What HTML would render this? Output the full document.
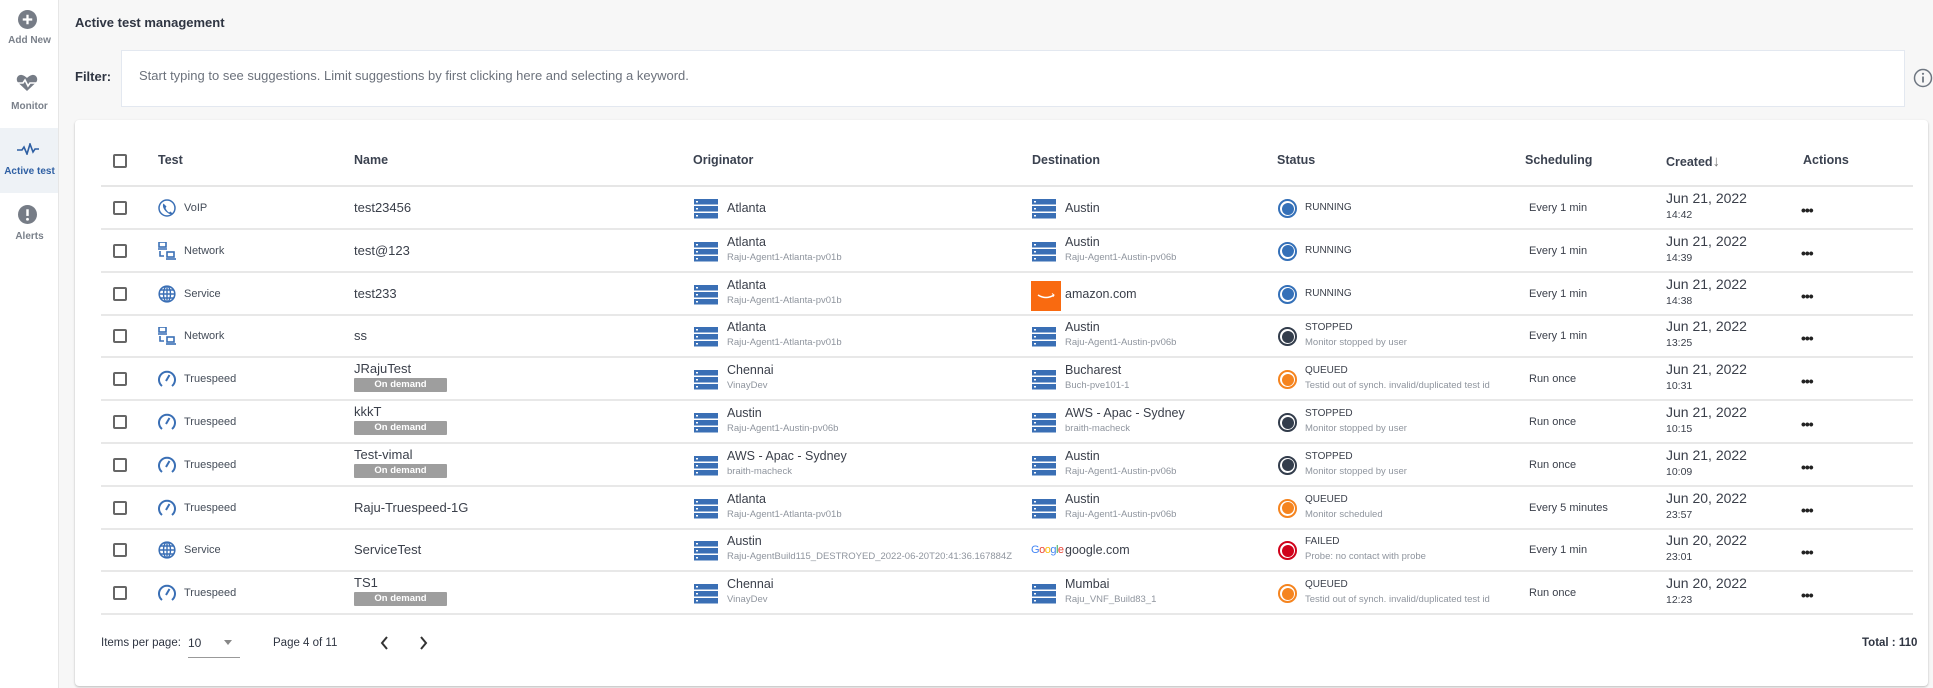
<!DOCTYPE html>
<html><head><meta charset="utf-8"><style>
*{box-sizing:border-box;margin:0;padding:0}
body{width:1933px;height:688px;overflow:hidden;background:#f7f7f7;font-family:"Liberation Sans",sans-serif;color:#3a3f4a;position:relative}
.abs{position:absolute}
.side{left:0;top:0;width:59px;height:688px;background:#fff;border-right:1px solid #e6e6e6}
.si{position:absolute;left:0;width:59px;text-align:center;font-size:10px;font-weight:bold;color:#7a808a}
.card{left:75px;top:120px;width:1853px;height:566px;background:#fff;border-radius:4px;box-shadow:0 1px 2px rgba(0,0,0,.25)}
.hd{position:absolute;top:153px;font-size:12.5px;font-weight:bold;color:#3b4250}
.row{position:absolute;left:101px;width:1812px;height:43px;border-bottom:2px solid #e8e8e8}
.cb{position:absolute;left:12px;top:14px;width:14px;height:14px;border:2px solid #666;border-radius:2px;background:#fff}
.t{position:absolute;font-size:11px;color:#444c58}
.n{position:absolute;font-size:13px;color:#3a3f4a}
.m{position:absolute;font-size:12.5px;color:#3a3f4a}
.s{position:absolute;font-size:9.5px;color:#8f959e}
.st{position:absolute;font-size:10px;color:#3a3f4a}
.badge{position:absolute;left:253px;top:20px;width:93px;height:14px;background:#9e9e9e;color:#fff;font-size:9.5px;font-weight:bold;text-align:center;line-height:14px;border-radius:1px}
.ring{position:absolute;left:1177px;width:19px;height:19px;border-radius:50%;border:2px solid;padding:1.5px;background:#fff}
.ring i{display:block;width:100%;height:100%;border-radius:50%}
.date{position:absolute;left:1565px;font-size:14px;color:#3a3f4a}
.time{position:absolute;left:1565px;font-size:10.5px;color:#3a3f4a}
.dots{position:absolute;left:1700px;top:18px;font-size:14px;font-weight:bold;letter-spacing:-1px;color:#222;line-height:10px}
</style></head><body>

<div class="abs side">
  <svg class="abs" style="left:18px;top:10px" width="19" height="19" viewBox="0 0 20 20"><circle cx="10" cy="10" r="10" fill="#767c86"/><path d="M10 5v10M5 10h10" stroke="#fff" stroke-width="2.4"/></svg>
  <div class="si" style="top:35px">Add New</div>
  <svg class="abs" style="left:16px;top:74px" width="22" height="18" viewBox="0 0 22 18"><path d="M11 17L2 8.5C-1 5 2 0 6 1c2 .4 4 2 5 3 1-1 3-2.6 5-3 4-1 7 4 4 7.5z" fill="#767c86"/><path d="M1 9h6l2-3 3 6 2-3h7" stroke="#fff" stroke-width="1.6" fill="none"/></svg>
  <div class="si" style="top:101px">Monitor</div>
  <div class="abs" style="left:0;top:128px;width:58px;height:65px;background:#eef2f6"></div>
  <svg class="abs" style="left:17px;top:143px" width="22" height="12" viewBox="0 0 22 12"><path d="M0 7h5l2-3 3 7 3-10 3 8 2-3h4" stroke="#2e5fa3" stroke-width="1.6" fill="none"/></svg>
  <div class="si" style="top:166px;color:#2e5fa3">Active test</div>
  <svg class="abs" style="left:18px;top:205px" width="19" height="19" viewBox="0 0 20 20"><circle cx="10" cy="10" r="10" fill="#767c86"/><path d="M10 4.5v7" stroke="#fff" stroke-width="2.6"/><circle cx="10" cy="15" r="1.5" fill="#fff"/></svg>
  <div class="si" style="top:231px">Alerts</div>
</div>

<div class="abs" style="left:75px;top:15px;font-size:13px;font-weight:bold;color:#2f3542">Active test management</div>
<div class="abs" style="left:75px;top:69px;font-size:13px;font-weight:bold;color:#2f3542">Filter:</div>
<div class="abs" style="left:121px;top:50px;width:1784px;height:57px;background:#fff;border:1px solid #e3e8f0"></div>
<div class="abs" style="left:139px;top:68px;font-size:13px;color:#6c727c">Start typing to see suggestions. Limit suggestions by first clicking here and selecting a keyword.</div>
<svg class="abs" style="left:1913px;top:68px" width="20" height="20" viewBox="0 0 20 20"><circle cx="10" cy="10" r="8.5" stroke="#6e7681" stroke-width="1.5" fill="none"/><path d="M10 8.5v6" stroke="#6e7681" stroke-width="1.8"/><circle cx="10" cy="5.8" r="1.1" fill="#6e7681"/></svg>

<div class="abs card"></div>
<div class="abs" style="left:113px;top:154px;width:14px;height:14px;border:2px solid #666;border-radius:2px;background:#fff"></div>
<div class="hd" style="left:158px">Test</div>
<div class="hd" style="left:354px">Name</div>
<div class="hd" style="left:693px">Originator</div>
<div class="hd" style="left:1032px">Destination</div>
<div class="hd" style="left:1277px">Status</div>
<div class="hd" style="left:1525px">Scheduling</div>
<div class="hd" style="left:1666px">Created<span style="font-weight:normal;color:#777;font-size:15px">&#8595;</span></div>
<div class="hd" style="left:1803px">Actions</div>
<div class="abs" style="left:101px;top:185px;width:1812px;height:2px;background:#e6e6e6"></div>

<svg width="0" height="0" style="position:absolute"><defs>
<g id="srv"><rect x="0" y="0" width="24" height="5.5" fill="#3a6fb5"/><rect x="0" y="7" width="24" height="5.5" fill="#3a6fb5"/><rect x="0" y="14" width="24" height="5.5" fill="#3a6fb5"/><rect x="2" y="2" width="2" height="1.5" fill="#fff"/><rect x="2" y="9" width="2" height="1.5" fill="#fff"/><rect x="2" y="16" width="2" height="1.5" fill="#fff"/></g>
<g id="voip"><circle cx="9" cy="9" r="8" fill="none" stroke="#3a6fb5" stroke-width="1.5"/><path d="M5.5 4.5c-1.5 2 0 6 3 8.5s5 3 6 1.5l-2-2-1.5 1c-1.5-1-3-3-3.5-4.5l1-1.5z" fill="#3a6fb5"/></g>
<g id="net"><rect x="1" y="0" width="7" height="5" fill="none" stroke="#3a6fb5" stroke-width="1.6"/><path d="M0 7h9M2 9v5h4" stroke="#3a6fb5" stroke-width="1.6" fill="none"/><rect x="9" y="10" width="7" height="5" fill="none" stroke="#3a6fb5" stroke-width="1.6"/><path d="M8 17h10" stroke="#3a6fb5" stroke-width="1.6"/></g>
<g id="svc"><circle cx="9" cy="9" r="7.8" fill="none" stroke="#3a6fb5" stroke-width="1.6"/><ellipse cx="9" cy="9" rx="3.5" ry="7.8" fill="none" stroke="#3a6fb5" stroke-width="1.4"/><path d="M1 9h16M2.5 5h13M2.5 13h13M9 1v16" stroke="#3a6fb5" stroke-width="1.4"/></g>
<g id="ts"><path d="M4 16A8 8 0 1 1 14 16" fill="none" stroke="#3a6fb5" stroke-width="2"/><path d="M8 11L11.5 5" stroke="#3a6fb5" stroke-width="2"/></g>
</defs></svg>

<div id="rows"></div>
<script>
var R=[
["voip","VoIP","test23456",0,"Atlanta","","srv","Austin","","run","RUNNING","","Every 1 min","Jun 21, 2022","14:42"],
["net","Network","test@123",0,"Atlanta","Raju-Agent1-Atlanta-pv01b","srv","Austin","Raju-Agent1-Austin-pv06b","run","RUNNING","","Every 1 min","Jun 21, 2022","14:39"],
["svc","Service","test233",0,"Atlanta","Raju-Agent1-Atlanta-pv01b","amz","amazon.com","","run","RUNNING","","Every 1 min","Jun 21, 2022","14:38"],
["net","Network","ss",0,"Atlanta","Raju-Agent1-Atlanta-pv01b","srv","Austin","Raju-Agent1-Austin-pv06b","stop","STOPPED","Monitor stopped by user","Every 1 min","Jun 21, 2022","13:25"],
["ts","Truespeed","JRajuTest",1,"Chennai","VinayDev","srv","Bucharest","Buch-pve101-1","q","QUEUED","Testid out of synch. invalid/duplicated test id","Run once","Jun 21, 2022","10:31"],
["ts","Truespeed","kkkT",1,"Austin","Raju-Agent1-Austin-pv06b","srv","AWS - Apac - Sydney","braith-macheck","stop","STOPPED","Monitor stopped by user","Run once","Jun 21, 2022","10:15"],
["ts","Truespeed","Test-vimal",1,"AWS - Apac - Sydney","braith-macheck","srv","Austin","Raju-Agent1-Austin-pv06b","stop","STOPPED","Monitor stopped by user","Run once","Jun 21, 2022","10:09"],
["ts","Truespeed","Raju-Truespeed-1G",0,"Atlanta","Raju-Agent1-Atlanta-pv01b","srv","Austin","Raju-Agent1-Austin-pv06b","q","QUEUED","Monitor scheduled","Every 5 minutes","Jun 20, 2022","23:57"],
["svc","Service","ServiceTest",0,"Austin","Raju-AgentBuild115_DESTROYED_2022-06-20T20:41:36.167884Z","goo","google.com","","fail","FAILED","Probe: no contact with probe","Every 1 min","Jun 20, 2022","23:01"],
["ts","Truespeed","TS1",1,"Chennai","VinayDev","srv","Mumbai","Raju_VNF_Build83_1","q","QUEUED","Testid out of synch. invalid/duplicated test id","Run once","Jun 20, 2022","12:23"]];
var C={run:"#3470b8",stop:"#333d4c",q:"#f5841f",fail:"#d0021b"};
var h="";
R.forEach(function(r,i){
 var top=187+i*42.8;
 h+='<div class="row" style="top:'+top+'px">';
 h+='<div class="cb"></div>';
 h+='<svg style="position:absolute;left:57px;top:12px" width="19" height="19"><use href="#'+r[0]+'"/></svg>';
 h+='<div class="t" style="left:83px;top:15px">'+r[1]+'</div>';
 if(r[3]){h+='<div class="n" style="left:253px;top:3px">'+r[2]+'</div><div class="badge">On demand</div>';}
 else h+='<div class="n" style="left:253px;top:13px">'+r[2]+'</div>';
 h+='<svg style="position:absolute;left:593px;top:12px" width="24" height="20"><use href="#srv"/></svg>';
 if(r[5]){h+='<div class="m" style="left:626px;top:5px">'+r[4]+'</div><div class="s" style="left:626px;top:22px">'+r[5]+'</div>';}
 else h+='<div class="m" style="left:626px;top:14px">'+r[4]+'</div>';
 if(r[6]=="srv")h+='<svg style="position:absolute;left:931px;top:12px" width="24" height="20"><use href="#srv"/></svg>';
 else if(r[6]=="amz")h+='<div style="position:absolute;left:930px;top:8px;width:30px;height:30px;background:#f96a10"><svg width="30" height="30"><path d="M7 14q8 5 16 0" stroke="#fff" stroke-width="1.6" fill="none"/><path d="M21 12.5l2 1.5-1 1.8" stroke="#fff" stroke-width="1" fill="none"/></svg></div>';
 else h+='<div style="position:absolute;left:930px;top:15px;font-size:11px;letter-spacing:-.5px"><span style="color:#4285f4">G</span><span style="color:#ea4335">o</span><span style="color:#fbbc05">o</span><span style="color:#4285f4">g</span><span style="color:#34a853">l</span><span style="color:#ea4335">e</span></div>';
 if(r[8]){h+='<div class="m" style="left:964px;top:5px">'+r[7]+'</div><div class="s" style="left:964px;top:22px">'+r[8]+'</div>';}
 else h+='<div class="m" style="left:964px;top:14px">'+r[7]+'</div>';
 h+='<div class="ring" style="top:12px;border-color:'+C[r[9]]+'"><i style="background:'+C[r[9]]+'"></i></div>';
 if(r[11]){h+='<div class="st" style="left:1204px;top:7px">'+r[10]+'</div><div class="s" style="left:1204px;top:22px">'+r[11]+'</div>';}
 else h+='<div class="st" style="left:1204px;top:15px">'+r[10]+'</div>';
 h+='<div class="t" style="left:1428px;top:15px;color:#3a3f4a">'+r[12]+'</div>';
 h+='<div class="date" style="top:3px">'+r[13]+'</div><div class="time" style="top:22px">'+r[14]+'</div>';
 h+='<div class="dots">&bull;&bull;&bull;</div>';
 h+='</div>';
});
document.getElementById("rows").innerHTML=h;
</script>

<div class="abs" style="left:101px;top:637px;font-size:11.5px;color:#2f3542">Items per page:</div>
<div class="abs" style="left:188px;top:636px;font-size:12px;color:#2f3542">10</div>
<div class="abs" style="left:224px;top:640px;width:0;height:0;border-left:4px solid transparent;border-right:4px solid transparent;border-top:5px solid #888"></div>
<div class="abs" style="left:188px;top:657px;width:52px;height:1px;background:#999"></div>
<div class="abs" style="left:273px;top:637px;font-size:11.5px;color:#2f3542">Page 4 of 11</div>
<svg class="abs" style="left:380px;top:636px" width="10" height="14"><path d="M7 1L2 7l5 6" stroke="#333" stroke-width="2" fill="none"/></svg>
<svg class="abs" style="left:418px;top:636px" width="10" height="14"><path d="M3 1l5 6-5 6" stroke="#333" stroke-width="2" fill="none"/></svg>
<div class="abs" style="left:1862px;top:637px;font-size:11.5px;font-weight:bold;color:#2f3542">Total : 110</div>
</body></html>
